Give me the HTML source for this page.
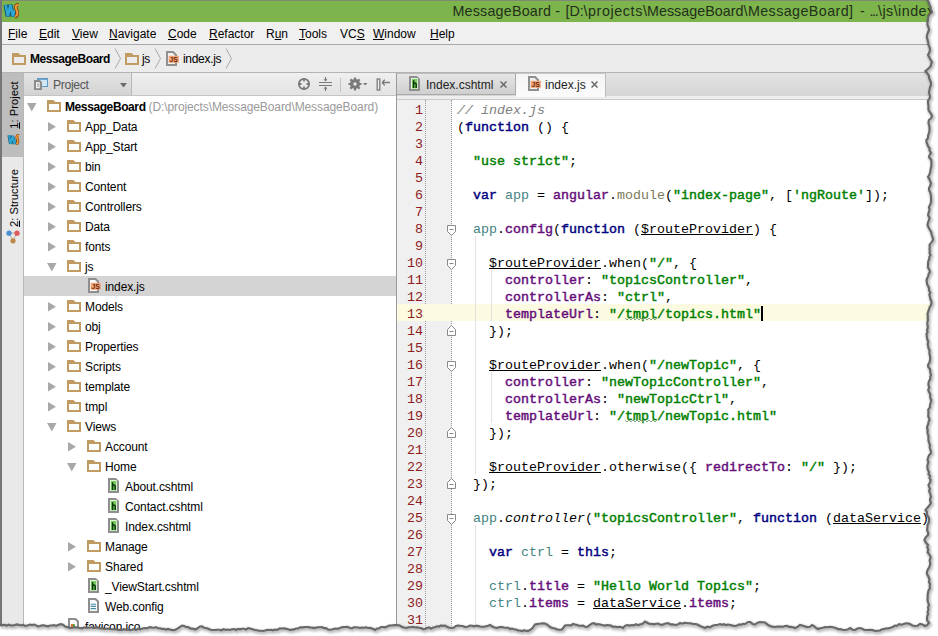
<!DOCTYPE html>
<html><head><meta charset="utf-8">
<style>
*{margin:0;padding:0;box-sizing:border-box}
html,body{width:938px;height:636px;overflow:hidden;background:#fff}
body{position:relative;font-family:"Liberation Sans",sans-serif;font-size:12px;color:#000}
.abs{position:absolute}
#frame{position:absolute;left:0;top:0;width:938px;height:636px;overflow:hidden}
#lb{left:0;top:0;width:2px;height:636px;background:#767676}
#tb{left:0;top:0;width:938px;height:1px;background:#7f8a76}
#title{left:0;top:0;width:938px;height:22px;background:#7db44b}
#title .t{position:absolute;top:3px;font-size:14.3px;color:#22301a;white-space:nowrap}
#menu{left:0;top:22px;width:938px;height:23px;background:#f0f0f0;border-bottom:1px solid #a8a8a8}
#menu span{position:absolute;top:5px;font-size:12px;color:#000}
#menu u{text-decoration:underline;text-underline-offset:1px}
#crumb{left:0;top:45px;width:938px;height:28px;background:#ececec;border-bottom:1px solid #b4b4b4}
.c{position:absolute;top:52px;font-size:12px;white-space:nowrap;letter-spacing:-0.3px}
#strip{left:2px;top:73px;width:22px;height:563px;background:#e9e9e9;border-right:1px solid #b9b9b9}
#phead{left:24px;top:73px;width:372px;height:23px;background:linear-gradient(#efefef,#e3e3e3);border-bottom:1px solid #c4c4c4}
#combo{left:24px;top:73px;width:108px;height:22px;background:linear-gradient(#e4e4e4,#d3d3d3);border-right:1px solid #b8b8b8}
#tabs{left:397px;top:73px;width:541px;height:23px;background:linear-gradient(#e2e2e2,#d6d6d6)}
#edb{left:396px;top:73px;width:1px;height:563px;background:#9a9a9a}
#gut{left:397px;top:96px;width:55px;height:540px;background:#f0f0f0}
.row{position:absolute;height:20px;line-height:20px;font-size:12px;letter-spacing:-0.12px;white-space:nowrap;color:#000}
.row.b{font-weight:bold;letter-spacing:-0.4px}
.gr{color:#9a9a9a;font-weight:normal;letter-spacing:-0.1px}
.code{position:absolute;left:457px;padding-top:2px;font-family:"Liberation Mono",monospace;font-size:13.33px;line-height:17px;height:19px;white-space:pre;color:#000}
.ln{position:absolute;left:397px;padding-top:2px;width:26px;text-align:right;font-family:"Liberation Mono",monospace;font-size:13.33px;line-height:17px;color:#8e1c1c}
.kw{color:#000080;-webkit-text-stroke:0.45px #000080}
.str{color:#008000;-webkit-text-stroke:0.45px #008000}
.cm{color:#808080;font-style:italic}
.prop{color:#660e7a;-webkit-text-stroke:0.45px #660e7a}
.it{color:#000;font-style:italic}
.loc{color:#458383}
.fn{color:#7a7a5a}
.ul{text-decoration:underline}
.caret{display:inline-block;width:2px;height:15px;background:#000;vertical-align:-3px}
</style></head><body>
<div id="frame">
<div id="title" class="abs"><span class="t" style="left:452.5px;letter-spacing:0.2px">MessageBoard -</span><span class="t" style="left:565.5px;letter-spacing:0px">[D:</span><span class="t" style="left:583.5px;letter-spacing:0.6px">\projects</span><span class="t" style="left:643px;letter-spacing:0.03px">\MessageBoard</span><span class="t" style="left:743.5px;letter-spacing:0.42px">\MessageBoard]</span><span class="t" style="left:860px;letter-spacing:0px">-</span><span class="t" style="left:869.5px;letter-spacing:-1.4px">...</span><span class="t" style="left:878px;letter-spacing:0.46px">\js\index.js</span></div>
<svg class="abs" style="left:2px;top:2px" width="20" height="18" viewBox="2 2 20 18"><path d="M5.7 4.8L7.8 16.3L10.4 5L12.9 16.3L14.6 10" fill="none" stroke="#0c5672" stroke-width="4.4" stroke-linejoin="miter" stroke-miterlimit="3"/><path d="M5.7 4.8L7.8 16.3L10.4 5L12.9 16.3L14.6 10" fill="none" stroke="#2fa6d4" stroke-width="2.6" stroke-linejoin="miter" stroke-miterlimit="3"/><path d="M18.6 5C15.8 4.4 15 7 16.4 9.6C17.9 12.3 17.6 16.2 15 16.6" fill="none" stroke="#80400c" stroke-width="3.6" stroke-linecap="butt"/><path d="M18.6 5C15.8 4.4 15 7 16.4 9.6C17.9 12.3 17.6 16.2 15 16.6" fill="none" stroke="#f39a3c" stroke-width="2" stroke-linecap="butt"/></svg>
<div id="tb" class="abs"></div>
<div id="menu" class="abs">
<span style="left:8px"><u>F</u>ile</span>
<span style="left:39px"><u>E</u>dit</span>
<span style="left:72px"><u>V</u>iew</span>
<span style="left:109px"><u>N</u>avigate</span>
<span style="left:168px"><u>C</u>ode</span>
<span style="left:209px"><u>R</u>efactor</span>
<span style="left:266px">R<u>u</u>n</span>
<span style="left:299px"><u>T</u>ools</span>
<span style="left:340px">VC<u>S</u></span>
<span style="left:373px"><u>W</u>indow</span>
<span style="left:430px"><u>H</u>elp</span>
</div>
<div id="crumb" class="abs"></div>
<svg class="abs" style="left:12px;top:53px" width="14" height="12" viewBox="0 0 14 12"><path d="M0 0H6.5L8.5 2H14V12H0Z" fill="#c09c62"/><rect x="2" y="4" width="10" height="6" fill="#ececec"/></svg>
<span class="c" style="left:30px;font-weight:bold;letter-spacing:-0.45px">MessageBoard</span>
<svg class="abs" style="left:114px;top:48px" width="8" height="22"><path d="M1 0.5L6.5 10.5L1 20.5" fill="none" stroke="#a8a8a8" stroke-width="1"/></svg>
<svg class="abs" style="left:125px;top:53px" width="14" height="12" viewBox="0 0 14 12"><path d="M0 0H6.5L8.5 2H14V12H0Z" fill="#c09c62"/><rect x="2" y="4" width="10" height="6" fill="#ececec"/></svg>
<span class="c" style="left:142px">js</span>
<svg class="abs" style="left:154px;top:48px" width="8" height="22"><path d="M1 0.5L6.5 10.5L1 20.5" fill="none" stroke="#a8a8a8" stroke-width="1"/></svg>
<svg class="abs" style="left:166px;top:51px" width="14" height="15" viewBox="0 0 14 15"><path d="M1 1H7L10 4V14H1Z" fill="#f0f0f0" stroke="#909090" stroke-width="2"/><rect x="2.7" y="4.8" width="10.2" height="7" fill="#f2a47c"/><text x="3.6" y="10.9" font-family="Liberation Sans" font-size="6.8" font-weight="bold" fill="#6a2800">JS</text></svg>
<span class="c" style="left:183px">index.js</span>
<svg class="abs" style="left:225px;top:48px" width="8" height="22"><path d="M1 0.5L6.5 10.5L1 20.5" fill="none" stroke="#a8a8a8" stroke-width="1"/></svg>

<div id="strip" class="abs"></div>
<div class="abs" style="left:2px;top:73px;width:21px;height:84px;background:#bdbdbd"></div>
<div class="abs" style="left:-17px;top:98px;width:62px;height:14px;transform:rotate(-90deg);font-size:11.2px;line-height:14px;text-align:center;white-space:nowrap"><u>1</u>: Project</div>
<svg class="abs" style="left:7px;top:134px" width="13" height="11" viewBox="0 0 13 11"><path d="M2 1.2L3.6 9.8L5.6 2L7.4 9.8L8.6 5.5" fill="none" stroke="#15607a" stroke-width="3.2" stroke-miterlimit="3"/><path d="M2 1.2L3.6 9.8L5.6 2L7.4 9.8L8.6 5.5" fill="none" stroke="#2fa6d4" stroke-width="1.8" stroke-miterlimit="3"/><path d="M12 1.5C10 0.9 9.3 3 10.3 5C11.3 7 11 9.6 9 9.9" fill="none" stroke="#8a4810" stroke-width="2.8"/><path d="M12 1.5C10 0.9 9.3 3 10.3 5C11.3 7 11 9.6 9 9.9" fill="none" stroke="#f39a3c" stroke-width="1.5"/></svg>
<div class="abs" style="left:-24px;top:191px;width:76px;height:14px;transform:rotate(-90deg);font-size:11.2px;line-height:14px;text-align:center;white-space:nowrap"><u>2</u>: Structure</div>
<svg class="abs" style="left:6px;top:230px" width="14" height="14" viewBox="0 0 14 14"><path d="M3 3L7 10.5L11 3Z" fill="none" stroke="#b0b0b0" stroke-width="1"/><circle cx="3" cy="3.2" r="2.6" fill="#4a90d0"/><circle cx="11" cy="3.2" r="2.6" fill="#e05a5a"/><circle cx="7" cy="10.8" r="2.6" fill="#c08848"/></svg>

<div id="phead" class="abs"></div>
<div id="combo" class="abs"></div>
<svg class="abs" style="left:33px;top:77px" width="16" height="13" viewBox="0 0 16 13"><rect x="4.5" y="1.5" width="10" height="8" fill="#d2e6f6" stroke="#5c98c4" stroke-width="1"/><rect x="4" y="1" width="11" height="1.8" fill="#5c98c4"/><path d="M1 3H7L9 5V13H1Z" fill="#8c8c8c"/><rect x="3" y="5.2" width="3.8" height="6" fill="#f2f2f2"/><path d="M4 7.3H6M4 9.2H6" stroke="#8c8c8c" stroke-width="0.9"/></svg>
<span class="abs" style="left:53px;top:78px;font-size:12.2px;color:#555;letter-spacing:-0.35px">Project</span>
<svg class="abs" style="left:120px;top:83px" width="8" height="5"><path d="M0 0H7L3.5 4.5Z" fill="#6a6a6a"/></svg>
<svg class="abs" style="left:297px;top:77px" width="14" height="14" viewBox="0 0 14 14"><circle cx="7" cy="7" r="5.2" fill="none" stroke="#7a7a7a" stroke-width="1.8"/><path d="M7 1V4.5M7 9.5V13M1 7H4.5M9.5 7H13" stroke="#7a7a7a" stroke-width="1.8"/></svg>
<svg class="abs" style="left:319px;top:77px" width="13" height="14" viewBox="0 0 13 14"><path d="M0 5.5H13M0 8.5H13M6.5 0V3.5M6.5 10.5V14" stroke="#7a7a7a" stroke-width="1.2"/><path d="M4.5 2.2L6.5 4.6L8.5 2.2ZM4.5 11.8L6.5 9.4L8.5 11.8Z" fill="#7a7a7a"/></svg>
<div class="abs" style="left:340px;top:78px;width:1px;height:14px;background:#c4c4c4"></div>
<svg class="abs" style="left:348px;top:77px" width="20" height="14" viewBox="0 0 20 14"><circle cx="7" cy="7" r="3.4" fill="none" stroke="#7a7a7a" stroke-width="3.4"/><path d="M7 0.5V3M7 11V13.5M0.5 7H3M11 7H13.5M2.4 2.4L4 4M10 10L11.6 11.6M2.4 11.6L4 10M10 4L11.6 2.4" stroke="#7a7a7a" stroke-width="2.2"/><path d="M15 6H19.5L17.25 8.5Z" fill="#7a7a7a"/></svg>
<svg class="abs" style="left:376px;top:78px" width="15" height="13" viewBox="0 0 15 13"><rect x="1.2" y="1" width="2.6" height="11" fill="#f4f4f4" stroke="#7a7a7a" stroke-width="1.3"/><path d="M6 4.5H14M6 4.5L8.8 1.7M6 4.5L8.8 7.3" fill="none" stroke="#7a7a7a" stroke-width="1.3"/></svg>

<div class="abs" style="left:24px;top:276px;width:372px;height:20px;background:#d4d4d4"></div>
<svg class="abs" style="left:27px;top:103px" width="10" height="9"><path d="M0 0H9.5L4.75 8.5Z" fill="#a8a8a8"/></svg>
<svg class="abs" style="left:47px;top:100px" width="14" height="12" viewBox="0 0 14 12"><path d="M0 0H6.5L8.5 2H14V12H0Z" fill="#c09c62"/><rect x="2" y="4" width="10" height="6" fill="#fff"/></svg>
<div class="row b" style="left:65px;top:97px">MessageBoard <span class="gr">(D:\projects\MessageBoard\MessageBoard)</span></div>
<svg class="abs" style="left:48px;top:122px" width="9" height="10"><path d="M0 0V9.5L8 4.75Z" fill="#a8a8a8"/></svg>
<svg class="abs" style="left:67px;top:120px" width="14" height="12" viewBox="0 0 14 12"><path d="M0 0H6.5L8.5 2H14V12H0Z" fill="#c09c62"/><rect x="2" y="4" width="10" height="6" fill="#fff"/></svg>
<div class="row" style="left:85px;top:117px">App_Data</div>
<svg class="abs" style="left:48px;top:142px" width="9" height="10"><path d="M0 0V9.5L8 4.75Z" fill="#a8a8a8"/></svg>
<svg class="abs" style="left:67px;top:140px" width="14" height="12" viewBox="0 0 14 12"><path d="M0 0H6.5L8.5 2H14V12H0Z" fill="#c09c62"/><rect x="2" y="4" width="10" height="6" fill="#fff"/></svg>
<div class="row" style="left:85px;top:137px">App_Start</div>
<svg class="abs" style="left:48px;top:162px" width="9" height="10"><path d="M0 0V9.5L8 4.75Z" fill="#a8a8a8"/></svg>
<svg class="abs" style="left:67px;top:160px" width="14" height="12" viewBox="0 0 14 12"><path d="M0 0H6.5L8.5 2H14V12H0Z" fill="#c09c62"/><rect x="2" y="4" width="10" height="6" fill="#fff"/></svg>
<div class="row" style="left:85px;top:157px">bin</div>
<svg class="abs" style="left:48px;top:182px" width="9" height="10"><path d="M0 0V9.5L8 4.75Z" fill="#a8a8a8"/></svg>
<svg class="abs" style="left:67px;top:180px" width="14" height="12" viewBox="0 0 14 12"><path d="M0 0H6.5L8.5 2H14V12H0Z" fill="#c09c62"/><rect x="2" y="4" width="10" height="6" fill="#fff"/></svg>
<div class="row" style="left:85px;top:177px">Content</div>
<svg class="abs" style="left:48px;top:202px" width="9" height="10"><path d="M0 0V9.5L8 4.75Z" fill="#a8a8a8"/></svg>
<svg class="abs" style="left:67px;top:200px" width="14" height="12" viewBox="0 0 14 12"><path d="M0 0H6.5L8.5 2H14V12H0Z" fill="#c09c62"/><rect x="2" y="4" width="10" height="6" fill="#fff"/></svg>
<div class="row" style="left:85px;top:197px">Controllers</div>
<svg class="abs" style="left:48px;top:222px" width="9" height="10"><path d="M0 0V9.5L8 4.75Z" fill="#a8a8a8"/></svg>
<svg class="abs" style="left:67px;top:220px" width="14" height="12" viewBox="0 0 14 12"><path d="M0 0H6.5L8.5 2H14V12H0Z" fill="#c09c62"/><rect x="2" y="4" width="10" height="6" fill="#fff"/></svg>
<div class="row" style="left:85px;top:217px">Data</div>
<svg class="abs" style="left:48px;top:242px" width="9" height="10"><path d="M0 0V9.5L8 4.75Z" fill="#a8a8a8"/></svg>
<svg class="abs" style="left:67px;top:240px" width="14" height="12" viewBox="0 0 14 12"><path d="M0 0H6.5L8.5 2H14V12H0Z" fill="#c09c62"/><rect x="2" y="4" width="10" height="6" fill="#fff"/></svg>
<div class="row" style="left:85px;top:237px">fonts</div>
<svg class="abs" style="left:47px;top:263px" width="10" height="9"><path d="M0 0H9.5L4.75 8.5Z" fill="#a8a8a8"/></svg>
<svg class="abs" style="left:67px;top:260px" width="14" height="12" viewBox="0 0 14 12"><path d="M0 0H6.5L8.5 2H14V12H0Z" fill="#c09c62"/><rect x="2" y="4" width="10" height="6" fill="#fff"/></svg>
<div class="row" style="left:85px;top:257px">js</div>
<svg class="abs" style="left:88px;top:278px" width="14" height="15" viewBox="0 0 14 15"><path d="M1 1H7.5L10 3.5V14H1Z" fill="#fafafa" stroke="#8e8e8e" stroke-width="2"/><rect x="2.7" y="4.8" width="10.2" height="7" fill="#f2a47c"/><text x="3.6" y="10.9" font-family="Liberation Sans" font-size="6.8" font-weight="bold" fill="#6a2800">JS</text></svg>
<div class="row" style="left:105px;top:277px">index.js</div>
<svg class="abs" style="left:48px;top:302px" width="9" height="10"><path d="M0 0V9.5L8 4.75Z" fill="#a8a8a8"/></svg>
<svg class="abs" style="left:67px;top:300px" width="14" height="12" viewBox="0 0 14 12"><path d="M0 0H6.5L8.5 2H14V12H0Z" fill="#c09c62"/><rect x="2" y="4" width="10" height="6" fill="#fff"/></svg>
<div class="row" style="left:85px;top:297px">Models</div>
<svg class="abs" style="left:48px;top:322px" width="9" height="10"><path d="M0 0V9.5L8 4.75Z" fill="#a8a8a8"/></svg>
<svg class="abs" style="left:67px;top:320px" width="14" height="12" viewBox="0 0 14 12"><path d="M0 0H6.5L8.5 2H14V12H0Z" fill="#c09c62"/><rect x="2" y="4" width="10" height="6" fill="#fff"/></svg>
<div class="row" style="left:85px;top:317px">obj</div>
<svg class="abs" style="left:48px;top:342px" width="9" height="10"><path d="M0 0V9.5L8 4.75Z" fill="#a8a8a8"/></svg>
<svg class="abs" style="left:67px;top:340px" width="14" height="12" viewBox="0 0 14 12"><path d="M0 0H6.5L8.5 2H14V12H0Z" fill="#c09c62"/><rect x="2" y="4" width="10" height="6" fill="#fff"/></svg>
<div class="row" style="left:85px;top:337px">Properties</div>
<svg class="abs" style="left:48px;top:362px" width="9" height="10"><path d="M0 0V9.5L8 4.75Z" fill="#a8a8a8"/></svg>
<svg class="abs" style="left:67px;top:360px" width="14" height="12" viewBox="0 0 14 12"><path d="M0 0H6.5L8.5 2H14V12H0Z" fill="#c09c62"/><rect x="2" y="4" width="10" height="6" fill="#fff"/></svg>
<div class="row" style="left:85px;top:357px">Scripts</div>
<svg class="abs" style="left:48px;top:382px" width="9" height="10"><path d="M0 0V9.5L8 4.75Z" fill="#a8a8a8"/></svg>
<svg class="abs" style="left:67px;top:380px" width="14" height="12" viewBox="0 0 14 12"><path d="M0 0H6.5L8.5 2H14V12H0Z" fill="#c09c62"/><rect x="2" y="4" width="10" height="6" fill="#fff"/></svg>
<div class="row" style="left:85px;top:377px">template</div>
<svg class="abs" style="left:48px;top:402px" width="9" height="10"><path d="M0 0V9.5L8 4.75Z" fill="#a8a8a8"/></svg>
<svg class="abs" style="left:67px;top:400px" width="14" height="12" viewBox="0 0 14 12"><path d="M0 0H6.5L8.5 2H14V12H0Z" fill="#c09c62"/><rect x="2" y="4" width="10" height="6" fill="#fff"/></svg>
<div class="row" style="left:85px;top:397px">tmpl</div>
<svg class="abs" style="left:47px;top:423px" width="10" height="9"><path d="M0 0H9.5L4.75 8.5Z" fill="#a8a8a8"/></svg>
<svg class="abs" style="left:67px;top:420px" width="14" height="12" viewBox="0 0 14 12"><path d="M0 0H6.5L8.5 2H14V12H0Z" fill="#c09c62"/><rect x="2" y="4" width="10" height="6" fill="#fff"/></svg>
<div class="row" style="left:85px;top:417px">Views</div>
<svg class="abs" style="left:68px;top:442px" width="9" height="10"><path d="M0 0V9.5L8 4.75Z" fill="#a8a8a8"/></svg>
<svg class="abs" style="left:87px;top:440px" width="14" height="12" viewBox="0 0 14 12"><path d="M0 0H6.5L8.5 2H14V12H0Z" fill="#c09c62"/><rect x="2" y="4" width="10" height="6" fill="#fff"/></svg>
<div class="row" style="left:105px;top:437px">Account</div>
<svg class="abs" style="left:67px;top:463px" width="10" height="9"><path d="M0 0H9.5L4.75 8.5Z" fill="#a8a8a8"/></svg>
<svg class="abs" style="left:87px;top:460px" width="14" height="12" viewBox="0 0 14 12"><path d="M0 0H6.5L8.5 2H14V12H0Z" fill="#c09c62"/><rect x="2" y="4" width="10" height="6" fill="#fff"/></svg>
<div class="row" style="left:105px;top:457px">Home</div>
<svg class="abs" style="left:108px;top:478px" width="12" height="15" viewBox="0 0 12 15"><path d="M1 1H7.5L10 3.5V14H1Z" fill="#fafafa" stroke="#8e8e8e" stroke-width="2"/><rect x="2" y="2" width="6.8" height="11" fill="#e4f6dc"/><rect x="3" y="3" width="5.2" height="9.4" fill="#78cc5e"/><path d="M4.6 4.2V12M4.6 8.2c0-1.5 2.6-1.5 2.6 0V12" fill="none" stroke="#0b3a0b" stroke-width="1.5"/></svg>
<div class="row" style="left:125px;top:477px">About.cshtml</div>
<svg class="abs" style="left:108px;top:498px" width="12" height="15" viewBox="0 0 12 15"><path d="M1 1H7.5L10 3.5V14H1Z" fill="#fafafa" stroke="#8e8e8e" stroke-width="2"/><rect x="2" y="2" width="6.8" height="11" fill="#e4f6dc"/><rect x="3" y="3" width="5.2" height="9.4" fill="#78cc5e"/><path d="M4.6 4.2V12M4.6 8.2c0-1.5 2.6-1.5 2.6 0V12" fill="none" stroke="#0b3a0b" stroke-width="1.5"/></svg>
<div class="row" style="left:125px;top:497px">Contact.cshtml</div>
<svg class="abs" style="left:108px;top:518px" width="12" height="15" viewBox="0 0 12 15"><path d="M1 1H7.5L10 3.5V14H1Z" fill="#fafafa" stroke="#8e8e8e" stroke-width="2"/><rect x="2" y="2" width="6.8" height="11" fill="#e4f6dc"/><rect x="3" y="3" width="5.2" height="9.4" fill="#78cc5e"/><path d="M4.6 4.2V12M4.6 8.2c0-1.5 2.6-1.5 2.6 0V12" fill="none" stroke="#0b3a0b" stroke-width="1.5"/></svg>
<div class="row" style="left:125px;top:517px">Index.cshtml</div>
<svg class="abs" style="left:68px;top:542px" width="9" height="10"><path d="M0 0V9.5L8 4.75Z" fill="#a8a8a8"/></svg>
<svg class="abs" style="left:87px;top:540px" width="14" height="12" viewBox="0 0 14 12"><path d="M0 0H6.5L8.5 2H14V12H0Z" fill="#c09c62"/><rect x="2" y="4" width="10" height="6" fill="#fff"/></svg>
<div class="row" style="left:105px;top:537px">Manage</div>
<svg class="abs" style="left:68px;top:562px" width="9" height="10"><path d="M0 0V9.5L8 4.75Z" fill="#a8a8a8"/></svg>
<svg class="abs" style="left:87px;top:560px" width="14" height="12" viewBox="0 0 14 12"><path d="M0 0H6.5L8.5 2H14V12H0Z" fill="#c09c62"/><rect x="2" y="4" width="10" height="6" fill="#fff"/></svg>
<div class="row" style="left:105px;top:557px">Shared</div>
<svg class="abs" style="left:88px;top:578px" width="12" height="15" viewBox="0 0 12 15"><path d="M1 1H7.5L10 3.5V14H1Z" fill="#fafafa" stroke="#8e8e8e" stroke-width="2"/><rect x="2" y="2" width="6.8" height="11" fill="#e4f6dc"/><rect x="3" y="3" width="5.2" height="9.4" fill="#78cc5e"/><path d="M4.6 4.2V12M4.6 8.2c0-1.5 2.6-1.5 2.6 0V12" fill="none" stroke="#0b3a0b" stroke-width="1.5"/></svg>
<div class="row" style="left:105px;top:577px">_ViewStart.cshtml</div>
<svg class="abs" style="left:88px;top:598px" width="12" height="15" viewBox="0 0 12 15"><path d="M1 1H7.5L10 3.5V14H1Z" fill="#fafafa" stroke="#8e8e8e" stroke-width="2"/><path d="M2.6 6.2H8M2.6 8.4H8M2.6 10.6H8" stroke="#4a8ea8" stroke-width="1.1"/></svg>
<div class="row" style="left:105px;top:597px">Web.config</div>
<svg class="abs" style="left:68px;top:618px" width="12" height="15" viewBox="0 0 12 15"><path d="M1 1H7.5L10 3.5V14H1Z" fill="#fafafa" stroke="#8e8e8e" stroke-width="2"/><rect x="3" y="6" width="2" height="5" fill="#e07030"/><rect x="5" y="6" width="2" height="5" fill="#60b040"/></svg>
<div class="row" style="left:85px;top:617px">favicon.ico</div>

<div id="tabs" class="abs"></div>
<div id="gut" class="abs"></div>
<div class="abs" style="left:397px;top:96px;width:541px;height:4px;background:#eeeeee;border-bottom:1px solid #c8c8c8"></div>
<div class="abs" style="left:397px;top:73px;width:119px;height:22px;background:linear-gradient(#e6e6e6,#cfcfcf);border:1px solid #aaaaaa;border-left:none;border-top-color:#bdbdbd"></div>
<svg class="abs" style="left:409px;top:76px" width="12" height="15" viewBox="0 0 12 15"><path d="M1 1H7.5L10 3.5V14H1Z" fill="#fafafa" stroke="#8e8e8e" stroke-width="2"/><rect x="2" y="2" width="6.8" height="11" fill="#e4f6dc"/><rect x="3" y="3" width="5.2" height="9.4" fill="#78cc5e"/><path d="M4.6 4.2V12M4.6 8.2c0-1.5 2.6-1.5 2.6 0V12" fill="none" stroke="#0b3a0b" stroke-width="1.5"/></svg>
<span class="abs" style="left:426px;top:78px;font-size:12px;color:#222">Index.cshtml</span>
<svg class="abs" style="left:500px;top:81px" width="7" height="7"><path d="M0.5 0.5L6.5 6.5M6.5 0.5L0.5 6.5" stroke="#6a6a6a" stroke-width="1.5"/></svg>
<div class="abs" style="left:516px;top:73px;width:90px;height:24px;background:linear-gradient(#f4f4f4,#fbfbfb);border-right:1px solid #bcbcbc;border-top:1px solid #c8c8c8"></div>
<svg class="abs" style="left:528px;top:76px" width="14" height="15" viewBox="0 0 14 15"><path d="M1 1H7L10 4V14H1Z" fill="#f0f0f0" stroke="#909090" stroke-width="2"/><rect x="2.7" y="4.8" width="10.2" height="7" fill="#f2a47c"/><text x="3.6" y="10.9" font-family="Liberation Sans" font-size="6.8" font-weight="bold" fill="#6a2800">JS</text></svg>
<span class="abs" style="left:545px;top:78px;font-size:12px;color:#222">index.js</span>
<svg class="abs" style="left:591px;top:81px" width="7" height="7"><path d="M0.5 0.5L6.5 6.5M6.5 0.5L0.5 6.5" stroke="#6a6a6a" stroke-width="1.5"/></svg>
<div class="abs" style="left:425px;top:100px;width:1px;height:536px;border-left:1px dotted #9a9a9a"></div>
<div class="abs" style="left:451px;top:100px;width:1px;height:536px;border-left:1px dotted #9a9a9a"></div>
<div class="abs" style="left:397px;top:304px;width:541px;height:17px;background:#fcfbe2"></div>
<div class="abs" style="left:475px;top:236px;width:1px;height:238px;background:#e2e2e2"></div>
<div class="abs" style="left:491px;top:270px;width:1px;height:51px;background:#e2e2e2"></div>
<div class="abs" style="left:491px;top:372px;width:1px;height:51px;background:#e2e2e2"></div>
<div class="abs" style="left:475px;top:525px;width:1px;height:102px;background:#e2e2e2"></div>
<div class="ln" style="top:100px">1</div>
<div class="code" style="top:100px"><span class="cm">// index.js</span></div>
<div class="ln" style="top:117px">2</div>
<div class="code" style="top:117px">(<span class="kw">function</span> () {</div>
<div class="ln" style="top:134px">3</div>
<div class="code" style="top:134px"></div>
<div class="ln" style="top:151px">4</div>
<div class="code" style="top:151px">  <span class="str">"use strict"</span>;</div>
<div class="ln" style="top:168px">5</div>
<div class="code" style="top:168px"></div>
<div class="ln" style="top:185px">6</div>
<div class="code" style="top:185px">  <span class="kw">var</span> <span class="loc">app</span> = <span class="prop">angular</span>.<span class="fn">module</span>(<span class="str">"index-page"</span>, [<span class="str">'ngRoute'</span>]);</div>
<div class="ln" style="top:202px">7</div>
<div class="code" style="top:202px"></div>
<div class="ln" style="top:219px">8</div>
<div class="code" style="top:219px">  <span class="loc">app</span>.<span class="prop">config</span>(<span class="kw">function</span> (<span class="ul">$routeProvider</span>) {</div>
<div class="ln" style="top:236px">9</div>
<div class="code" style="top:236px"></div>
<div class="ln" style="top:253px">10</div>
<div class="code" style="top:253px">    <span class="ul">$routeProvider</span>.when(<span class="str">"/"</span>, {</div>
<div class="ln" style="top:270px">11</div>
<div class="code" style="top:270px">      <span class="prop">controller</span>: <span class="str">"topicsController"</span>,</div>
<div class="ln" style="top:287px">12</div>
<div class="code" style="top:287px">      <span class="prop">controllerAs</span>: <span class="str">"ctrl"</span>,</div>
<div class="ln" style="top:304px">13</div>
<div class="code" style="top:304px">      <span class="prop">templateUrl</span>: <span class="str">"/<span class="sq">tmpl</span>/topics.html"</span><span class="caret"></span></div>
<div class="ln" style="top:321px">14</div>
<div class="code" style="top:321px">    });</div>
<div class="ln" style="top:338px">15</div>
<div class="code" style="top:338px"></div>
<div class="ln" style="top:355px">16</div>
<div class="code" style="top:355px">    <span class="ul">$routeProvider</span>.when(<span class="str">"/newTopic"</span>, {</div>
<div class="ln" style="top:372px">17</div>
<div class="code" style="top:372px">      <span class="prop">controller</span>: <span class="str">"newTopicController"</span>,</div>
<div class="ln" style="top:389px">18</div>
<div class="code" style="top:389px">      <span class="prop">controllerAs</span>: <span class="str">"newTopicCtrl"</span>,</div>
<div class="ln" style="top:406px">19</div>
<div class="code" style="top:406px">      <span class="prop">templateUrl</span>: <span class="str">"/<span class="sq">tmpl</span>/newTopic.html"</span></div>
<div class="ln" style="top:423px">20</div>
<div class="code" style="top:423px">    });</div>
<div class="ln" style="top:440px">21</div>
<div class="code" style="top:440px"></div>
<div class="ln" style="top:457px">22</div>
<div class="code" style="top:457px">    <span class="ul">$routeProvider</span>.otherwise({ <span class="prop">redirectTo</span>: <span class="str">"/"</span> });</div>
<div class="ln" style="top:474px">23</div>
<div class="code" style="top:474px">  });</div>
<div class="ln" style="top:491px">24</div>
<div class="code" style="top:491px"></div>
<div class="ln" style="top:508px">25</div>
<div class="code" style="top:508px">  <span class="loc">app</span>.<span class="it">controller</span>(<span class="str">"topicsController"</span>, <span class="kw">function</span> (<span class="ul">dataService</span>) {</div>
<div class="ln" style="top:525px">26</div>
<div class="code" style="top:525px"></div>
<div class="ln" style="top:542px">27</div>
<div class="code" style="top:542px">    <span class="kw">var</span> <span class="loc">ctrl</span> = <span class="kw">this</span>;</div>
<div class="ln" style="top:559px">28</div>
<div class="code" style="top:559px"></div>
<div class="ln" style="top:576px">29</div>
<div class="code" style="top:576px">    <span class="loc">ctrl</span>.<span class="prop">title</span> = <span class="str">"Hello World Topics"</span>;</div>
<div class="ln" style="top:593px">30</div>
<div class="code" style="top:593px">    <span class="loc">ctrl</span>.<span class="prop">items</span> = <span class="ul">dataService</span>.<span class="prop">items</span>;</div>
<div class="ln" style="top:610px">31</div>
<div class="code" style="top:610px"></div>
<svg class="abs" style="left:0;top:0" width="938" height="636"><polyline points="625,318 626,319 627,320 628,319 629,318 630,319 631,320 632,319 633,318 634,319 635,320 636,319 637,318 638,319 639,320 640,319 641,318 642,319 643,320 644,319 645,318 646,319 647,320 648,319 649,318 650,319 651,320 652,319 653,318 654,319 655,320 656,319 657,318" fill="none" stroke="#86a884" stroke-width="1"/></svg>
<svg class="abs" style="left:0;top:0" width="938" height="636"><polyline points="625,420 626,421 627,422 628,421 629,420 630,421 631,422 632,421 633,420 634,421 635,422 636,421 637,420 638,421 639,422 640,421 641,420 642,421 643,422 644,421 645,420 646,421 647,422 648,421 649,420 650,421 651,422 652,421 653,420 654,421 655,422 656,421 657,420" fill="none" stroke="#86a884" stroke-width="1"/></svg>
<svg class="abs" style="left:447px;top:225px" width="9" height="11"><path d="M0.5 0.5H8.5V6.5L4.5 10.5L0.5 6.5Z" fill="#fff" stroke="#8a8a8a" stroke-width="1"/><path d="M2.5 4.5H6.5" stroke="#8a8a8a" stroke-width="1"/></svg>
<svg class="abs" style="left:447px;top:259px" width="9" height="11"><path d="M0.5 0.5H8.5V6.5L4.5 10.5L0.5 6.5Z" fill="#fff" stroke="#8a8a8a" stroke-width="1"/><path d="M2.5 4.5H6.5" stroke="#8a8a8a" stroke-width="1"/></svg>
<svg class="abs" style="left:447px;top:361px" width="9" height="11"><path d="M0.5 0.5H8.5V6.5L4.5 10.5L0.5 6.5Z" fill="#fff" stroke="#8a8a8a" stroke-width="1"/><path d="M2.5 4.5H6.5" stroke="#8a8a8a" stroke-width="1"/></svg>
<svg class="abs" style="left:447px;top:514px" width="9" height="11"><path d="M0.5 0.5H8.5V6.5L4.5 10.5L0.5 6.5Z" fill="#fff" stroke="#8a8a8a" stroke-width="1"/><path d="M2.5 4.5H6.5" stroke="#8a8a8a" stroke-width="1"/></svg>
<svg class="abs" style="left:447px;top:325px" width="9" height="11"><path d="M0.5 10.5H8.5V4.5L4.5 0.5L0.5 4.5Z" fill="#fff" stroke="#8a8a8a" stroke-width="1"/><path d="M2.5 6.5H6.5" stroke="#8a8a8a" stroke-width="1"/></svg>
<svg class="abs" style="left:447px;top:427px" width="9" height="11"><path d="M0.5 10.5H8.5V4.5L4.5 0.5L0.5 4.5Z" fill="#fff" stroke="#8a8a8a" stroke-width="1"/><path d="M2.5 6.5H6.5" stroke="#8a8a8a" stroke-width="1"/></svg>
<svg class="abs" style="left:447px;top:478px" width="9" height="11"><path d="M0.5 10.5H8.5V4.5L4.5 0.5L0.5 4.5Z" fill="#fff" stroke="#8a8a8a" stroke-width="1"/><path d="M2.5 6.5H6.5" stroke="#8a8a8a" stroke-width="1"/></svg>
<div id="edb" class="abs"></div>
<div id="lb" class="abs"></div>
<svg class="abs" style="left:0;top:0" width="938" height="636"><defs><filter id="bl" x="-5%" y="-5%" width="110%" height="110%"><feGaussianBlur stdDeviation="1.2"/></filter></defs><path d="M0.0 625.4 L2.2 625.1 L4.3 624.8 L6.5 625.6 L8.7 624.7 L10.8 625.5 L13.0 625.4 L15.0 625.1 L17.0 624.4 L19.0 625.0 L21.0 625.3 L23.0 624.9 L25.0 626.0 L27.3 625.6 L29.7 624.6 L32.0 625.0 L34.0 624.6 L36.0 625.4 L38.0 626.3 L40.0 626.0 L42.0 625.3 L44.0 625.4 L46.0 625.9 L48.0 626.3 L50.0 625.5 L52.0 625.5 L54.0 625.1 L56.0 625.9 L58.0 625.0 L60.5 624.2 L63.0 624.8 L65.0 626.5 L67.0 627.0 L70.0 628.0 L72.0 627.7 L74.0 627.4 L76.0 627.4 L78.0 627.7 L80.0 628.0 L82.0 628.4 L84.0 627.3 L86.0 627.8 L88.0 627.8 L90.0 627.5 L92.0 627.5 L94.0 628.0 L96.0 627.4 L98.0 627.6 L100.0 628.5 L102.0 628.1 L104.0 629.0 L106.0 628.7 L108.0 628.6 L110.0 629.0 L112.0 629.3 L114.0 629.2 L116.0 629.1 L118.0 630.0 L120.0 629.7 L122.0 630.0 L124.0 629.2 L126.0 629.7 L128.0 629.6 L130.0 630.1 L132.0 629.8 L134.0 629.1 L136.0 630.1 L138.0 628.7 L140.0 629.3 L142.5 628.5 L145.0 628.0 L147.3 628.2 L149.7 627.1 L152.0 627.5 L154.0 627.7 L156.0 627.1 L158.0 628.3 L160.0 628.2 L162.0 628.9 L164.0 628.8 L166.0 629.6 L168.0 628.9 L170.0 629.5 L172.5 630.1 L175.0 630.0 L177.3 628.7 L179.7 627.1 L182.0 625.5 L184.0 625.9 L186.0 627.0 L188.0 627.0 L190.3 628.5 L192.7 628.6 L195.0 629.5 L197.5 628.3 L200.0 626.5 L202.0 626.3 L204.0 627.8 L206.0 628.0 L208.2 628.7 L210.5 629.8 L212.8 630.0 L215.0 630.0 L217.1 629.7 L219.3 629.8 L221.4 630.3 L223.6 629.2 L225.7 629.9 L227.9 629.5 L230.0 630.0 L232.0 629.2 L234.0 629.0 L236.0 630.0 L238.0 628.8 L240.0 629.3 L242.0 628.8 L244.0 628.8 L246.0 629.5 L248.0 628.1 L250.0 628.6 L252.5 629.2 L255.0 630.0 L257.0 630.2 L259.0 630.8 L261.0 630.8 L263.0 631.0 L265.0 630.5 L267.0 629.9 L269.0 630.0 L271.0 629.7 L273.0 630.3 L275.0 629.5 L277.3 629.9 L279.7 628.3 L282.0 628.5 L284.0 628.4 L286.0 628.8 L288.0 629.2 L290.0 630.0 L292.0 629.6 L294.0 629.4 L296.0 628.5 L298.0 628.5 L300.3 627.2 L302.7 627.4 L305.0 627.0 L307.3 627.0 L309.7 627.4 L312.0 627.5 L314.0 628.1 L316.0 627.6 L318.0 627.2 L320.0 627.3 L322.0 627.0 L324.0 628.1 L326.0 628.0 L328.0 629.5 L330.3 629.8 L332.7 629.3 L335.0 628.5 L337.0 628.8 L339.0 628.4 L341.0 627.4 L343.0 627.1 L345.0 627.0 L347.5 626.9 L350.0 628.0 L352.0 628.2 L354.0 627.3 L356.0 627.3 L358.0 627.5 L360.0 628.0 L362.0 627.5 L364.0 627.7 L366.0 627.3 L368.0 628.0 L370.3 627.9 L372.7 628.8 L375.0 630.0 L377.0 628.6 L379.0 628.3 L381.0 627.0 L383.0 627.0 L385.0 627.3 L387.0 626.6 L389.0 625.6 L391.0 625.5 L393.0 625.3 L395.0 625.1 L397.0 625.0 L399.5 625.4 L402.0 627.0 L404.2 627.6 L406.3 628.0 L408.5 627.2 L410.7 627.3 L412.8 626.8 L415.0 627.5 L417.0 627.2 L419.0 627.8 L421.0 628.0 L423.0 629.2 L425.0 629.0 L427.0 628.1 L429.0 627.5 L431.0 628.6 L433.0 627.5 L435.0 627.2 L437.0 626.3 L439.0 626.6 L441.0 625.4 L443.0 625.9 L445.0 625.5 L447.3 627.1 L449.7 627.7 L452.0 628.0 L454.0 627.5 L456.0 626.0 L458.0 625.5 L460.3 625.8 L462.7 626.0 L465.0 627.0 L467.5 626.7 L470.0 625.5 L472.0 625.8 L474.0 626.3 L476.0 625.8 L478.0 625.9 L480.0 626.5 L482.0 626.7 L484.0 626.7 L486.0 626.2 L488.0 625.8 L490.0 625.0 L492.3 626.5 L494.7 627.4 L497.0 628.0 L499.5 627.1 L502.0 627.0 L504.0 627.5 L506.0 627.8 L508.0 627.7 L510.0 629.0 L512.0 628.5 L514.0 629.2 L516.0 629.5 L518.0 630.5 L520.0 630.5 L522.0 631.1 L524.0 630.2 L526.0 630.9 L528.0 630.9 L530.0 630.0 L532.5 628.0 L535.0 624.5 L537.0 624.1 L539.0 623.7 L541.0 623.5 L543.0 623.2 L545.0 623.5 L547.5 624.8 L550.0 627.0 L552.5 627.9 L555.0 628.5 L557.3 629.5 L559.7 629.7 L562.0 629.5 L565.0 625.5 L567.0 625.3 L569.0 625.3 L571.0 625.4 L573.0 624.0 L575.0 624.5 L577.0 625.0 L579.0 625.7 L581.0 625.7 L583.0 625.5 L585.0 626.7 L587.0 627.0 L589.5 625.2 L592.0 623.5 L594.0 623.2 L596.0 624.5 L598.0 624.0 L600.0 624.5 L602.3 625.1 L604.7 625.6 L607.0 625.0 L609.0 625.2 L611.0 625.6 L613.0 626.8 L615.0 626.5 L617.0 627.2 L619.0 626.7 L621.0 627.0 L623.0 628.0 L625.0 625.9 L627.0 625.0 L629.5 625.6 L632.0 625.0 L634.0 625.4 L636.0 624.2 L638.0 625.1 L640.0 624.5 L642.5 623.8 L645.0 621.5 L647.5 623.0 L650.0 624.0 L652.0 623.9 L654.0 624.3 L656.0 623.7 L658.0 623.6 L660.0 624.5 L662.0 624.9 L664.0 624.0 L666.0 623.4 L668.0 623.0 L670.3 624.4 L672.7 624.2 L675.0 625.0 L677.5 624.6 L680.0 623.0 L682.1 623.7 L684.3 622.8 L686.4 623.0 L688.6 623.2 L690.7 623.3 L692.9 624.0 L695.0 624.0 L697.5 624.6 L700.0 626.0 L702.5 626.9 L705.0 628.0 L707.3 626.7 L709.7 627.3 L712.0 626.0 L714.0 625.3 L716.0 625.0 L718.0 624.7 L720.0 624.1 L722.0 624.8 L724.0 624.2 L726.0 625.1 L728.0 624.5 L730.3 625.0 L732.7 625.6 L735.0 626.0 L737.0 625.6 L739.0 624.4 L741.0 624.7 L743.0 623.9 L745.0 624.0 L748.0 622.0 L750.3 622.0 L752.7 624.1 L755.0 624.5 L757.5 622.7 L760.0 622.0 L762.5 622.2 L765.0 622.5 L767.5 624.6 L770.0 626.0 L772.5 626.6 L775.0 627.0 L777.0 626.5 L779.0 626.6 L781.0 626.5 L783.0 626.7 L785.0 626.0 L787.0 625.8 L789.0 626.9 L791.0 626.8 L793.0 627.2 L795.0 628.0 L797.5 626.9 L800.0 625.0 L802.0 625.5 L804.0 626.1 L806.0 626.9 L808.0 627.0 L810.0 626.7 L812.0 625.0 L814.0 626.2 L816.0 627.8 L818.0 629.0 L820.3 628.3 L822.7 627.7 L825.0 627.0 L827.3 627.3 L829.7 626.9 L832.0 627.0 L834.0 627.6 L836.0 628.0 L838.0 629.2 L840.0 629.0 L842.5 629.8 L845.0 630.0 L847.5 629.6 L850.0 628.0 L852.5 629.7 L855.0 630.0 L857.5 628.6 L860.0 628.0 L862.0 628.6 L864.0 629.7 L866.0 630.0 L868.0 630.0 L870.3 629.8 L872.7 630.1 L875.0 631.0 L877.5 630.7 L880.0 630.5 L882.0 629.3 L884.0 629.1 L886.0 628.3 L888.0 628.5 L890.3 627.8 L892.7 627.0 L895.0 625.5 L897.0 625.7 L899.0 624.1 L901.0 624.6 L903.0 624.2 L905.0 623.5 L907.5 623.2 L910.0 624.0 L912.5 625.6 L915.0 626.0 L917.5 625.7 L920.0 624.0 L922.5 624.6 L925.0 626.0 L927.0 625.2 L929.0 623.0 L927.0 620.0 L927.0 618.0 L927.2 616.0 L928.2 614.0 L927.5 612.0 L928.5 609.7 L928.0 607.3 L929.0 605.0 L928.1 602.5 L927.5 600.0 L927.7 597.7 L927.6 595.3 L928.0 593.0 L928.5 590.5 L930.0 588.0 L929.6 586.0 L930.1 584.0 L928.9 582.0 L929.5 580.0 L929.0 578.0 L928.2 576.0 L926.9 574.0 L927.0 572.0 L927.7 569.7 L929.2 567.3 L930.0 565.0 L930.2 562.7 L929.6 560.3 L930.5 558.0 L930.3 556.0 L929.0 554.0 L927.5 552.0 L928.4 549.7 L927.2 547.3 L928.0 545.0 L925.8 542.5 L924.4 540.0 L925.5 537.5 L928.0 535.0 L928.3 533.0 L927.4 531.0 L927.1 529.0 L927.5 527.0 L927.5 525.0 L928.7 522.7 L929.0 520.3 L929.0 518.0 L927.7 516.0 L926.7 514.0 L927.0 512.0 L925.5 510.0 L927.4 507.7 L929.5 505.3 L931.0 503.0 L930.2 501.0 L930.0 499.0 L930.9 497.0 L930.5 495.0 L930.0 493.0 L929.0 491.0 L930.0 489.0 L929.1 487.0 L928.5 485.0 L930.0 482.5 L930.6 480.0 L929.4 478.0 L930.1 476.0 L928.4 474.0 L929.1 472.0 L927.9 470.0 L927.5 468.0 L927.3 466.0 L927.8 464.0 L928.5 462.0 L927.5 460.0 L928.0 458.0 L928.9 455.5 L931.0 453.0 L930.8 451.0 L930.1 449.0 L929.6 447.0 L930.0 445.0 L929.1 442.8 L928.5 440.5 L928.4 438.2 L928.5 436.0 L927.8 434.0 L927.4 432.0 L927.8 430.0 L927.0 428.0 L927.3 426.0 L928.3 424.0 L928.4 422.0 L929.5 420.0 L929.0 418.0 L928.2 416.0 L928.4 414.0 L928.5 412.0 L928.2 409.7 L929.9 407.3 L930.0 405.0 L930.7 402.5 L931.3 400.0 L930.2 398.0 L930.1 396.0 L930.3 394.0 L929.0 392.0 L928.2 389.8 L929.3 387.5 L928.5 385.2 L928.5 383.0 L929.1 381.0 L930.3 379.0 L930.2 377.0 L931.0 375.0 L930.4 373.0 L930.1 371.0 L930.0 369.0 L928.3 367.0 L928.0 365.0 L929.5 362.5 L930.0 360.0 L930.2 358.0 L930.0 356.0 L929.5 354.0 L929.4 352.0 L929.5 350.0 L928.4 348.0 L928.1 346.0 L927.6 344.0 L928.3 342.0 L927.5 340.0 L927.0 338.0 L926.8 336.0 L926.5 334.0 L927.6 332.0 L927.0 330.0 L927.8 328.0 L927.7 326.0 L927.3 324.0 L927.4 322.0 L928.0 320.0 L927.7 318.0 L927.9 316.0 L927.5 314.0 L928.0 312.0 L928.9 309.7 L929.6 307.3 L931.0 305.0 L931.5 303.0 L931.3 301.0 L930.3 299.0 L930.0 297.0 L929.3 294.8 L930.2 292.5 L928.9 290.2 L929.0 288.0 L928.1 286.0 L927.0 284.0 L926.9 282.0 L926.5 280.0 L927.3 278.0 L928.3 276.0 L928.6 274.0 L930.0 272.0 L929.3 269.7 L927.9 267.3 L928.0 265.0 L928.1 263.0 L928.3 261.0 L929.3 259.0 L929.3 257.0 L930.5 255.0 L929.5 253.0 L929.8 251.0 L929.5 249.0 L929.8 247.0 L929.5 245.0 L931.3 242.5 L933.0 240.0 L932.8 238.0 L932.1 236.0 L931.5 234.0 L931.2 232.0 L930.0 230.0 L928.6 227.5 L927.5 225.0 L928.0 222.5 L929.0 220.0 L929.6 217.7 L928.1 215.3 L928.5 213.0 L929.2 211.0 L929.5 209.0 L928.9 207.0 L930.0 205.0 L930.8 203.0 L931.1 201.0 L931.0 199.0 L931.0 197.0 L930.7 194.7 L930.2 192.3 L929.0 190.0 L929.1 187.7 L930.4 185.3 L931.0 183.0 L930.0 181.0 L929.5 179.0 L928.0 177.0 L929.3 174.7 L930.2 172.3 L930.5 170.0 L930.8 168.0 L931.4 166.0 L931.3 164.0 L931.4 162.0 L931.3 160.0 L929.0 157.0 L929.6 155.0 L931.0 153.0 L929.5 150.5 L929.5 148.0 L927.9 146.0 L927.3 144.0 L926.5 142.0 L926.4 140.0 L928.0 138.0 L928.0 136.0 L928.6 134.0 L929.2 132.0 L929.5 130.0 L929.5 128.0 L929.3 126.0 L928.7 124.0 L928.5 122.0 L928.9 120.0 L931.3 118.0 L932.0 116.0 L931.2 114.0 L929.7 112.0 L928.5 110.0 L928.4 107.7 L928.4 105.3 L928.0 103.0 L928.0 100.7 L929.7 98.3 L930.0 96.0 L929.4 94.0 L929.0 92.0 L929.5 90.0 L929.9 87.5 L931.0 85.0 L930.9 82.5 L930.0 80.0 L929.0 78.0 L929.0 76.0 L927.6 73.5 L925.5 71.0 L929.0 68.0 L930.8 66.0 L931.0 64.0 L932.0 62.0 L930.5 59.7 L929.3 57.3 L928.0 55.0 L929.3 52.5 L930.0 50.0 L929.7 47.5 L928.5 45.0 L928.2 42.7 L927.7 40.3 L927.0 38.0 L926.8 36.0 L927.4 34.0 L928.1 32.0 L929.0 30.0 L928.6 27.5 L927.5 25.0 L927.4 22.7 L927.9 20.3 L928.0 18.0 L928.6 16.0 L930.0 14.0 L932.0 12.0 L930.8 9.7 L930.6 7.3 L929.5 5.0 L928.8 2.5 L927.5 0.0 L927.5 -2.0 L938 0 L938 636 L0 636 Z" fill="#fff"/><path d="M0.0 625.4 L2.2 625.1 L4.3 624.8 L6.5 625.6 L8.7 624.7 L10.8 625.5 L13.0 625.4 L15.0 625.1 L17.0 624.4 L19.0 625.0 L21.0 625.3 L23.0 624.9 L25.0 626.0 L27.3 625.6 L29.7 624.6 L32.0 625.0 L34.0 624.6 L36.0 625.4 L38.0 626.3 L40.0 626.0 L42.0 625.3 L44.0 625.4 L46.0 625.9 L48.0 626.3 L50.0 625.5 L52.0 625.5 L54.0 625.1 L56.0 625.9 L58.0 625.0 L60.5 624.2 L63.0 624.8 L65.0 626.5 L67.0 627.0 L70.0 628.0 L72.0 627.7 L74.0 627.4 L76.0 627.4 L78.0 627.7 L80.0 628.0 L82.0 628.4 L84.0 627.3 L86.0 627.8 L88.0 627.8 L90.0 627.5 L92.0 627.5 L94.0 628.0 L96.0 627.4 L98.0 627.6 L100.0 628.5 L102.0 628.1 L104.0 629.0 L106.0 628.7 L108.0 628.6 L110.0 629.0 L112.0 629.3 L114.0 629.2 L116.0 629.1 L118.0 630.0 L120.0 629.7 L122.0 630.0 L124.0 629.2 L126.0 629.7 L128.0 629.6 L130.0 630.1 L132.0 629.8 L134.0 629.1 L136.0 630.1 L138.0 628.7 L140.0 629.3 L142.5 628.5 L145.0 628.0 L147.3 628.2 L149.7 627.1 L152.0 627.5 L154.0 627.7 L156.0 627.1 L158.0 628.3 L160.0 628.2 L162.0 628.9 L164.0 628.8 L166.0 629.6 L168.0 628.9 L170.0 629.5 L172.5 630.1 L175.0 630.0 L177.3 628.7 L179.7 627.1 L182.0 625.5 L184.0 625.9 L186.0 627.0 L188.0 627.0 L190.3 628.5 L192.7 628.6 L195.0 629.5 L197.5 628.3 L200.0 626.5 L202.0 626.3 L204.0 627.8 L206.0 628.0 L208.2 628.7 L210.5 629.8 L212.8 630.0 L215.0 630.0 L217.1 629.7 L219.3 629.8 L221.4 630.3 L223.6 629.2 L225.7 629.9 L227.9 629.5 L230.0 630.0 L232.0 629.2 L234.0 629.0 L236.0 630.0 L238.0 628.8 L240.0 629.3 L242.0 628.8 L244.0 628.8 L246.0 629.5 L248.0 628.1 L250.0 628.6 L252.5 629.2 L255.0 630.0 L257.0 630.2 L259.0 630.8 L261.0 630.8 L263.0 631.0 L265.0 630.5 L267.0 629.9 L269.0 630.0 L271.0 629.7 L273.0 630.3 L275.0 629.5 L277.3 629.9 L279.7 628.3 L282.0 628.5 L284.0 628.4 L286.0 628.8 L288.0 629.2 L290.0 630.0 L292.0 629.6 L294.0 629.4 L296.0 628.5 L298.0 628.5 L300.3 627.2 L302.7 627.4 L305.0 627.0 L307.3 627.0 L309.7 627.4 L312.0 627.5 L314.0 628.1 L316.0 627.6 L318.0 627.2 L320.0 627.3 L322.0 627.0 L324.0 628.1 L326.0 628.0 L328.0 629.5 L330.3 629.8 L332.7 629.3 L335.0 628.5 L337.0 628.8 L339.0 628.4 L341.0 627.4 L343.0 627.1 L345.0 627.0 L347.5 626.9 L350.0 628.0 L352.0 628.2 L354.0 627.3 L356.0 627.3 L358.0 627.5 L360.0 628.0 L362.0 627.5 L364.0 627.7 L366.0 627.3 L368.0 628.0 L370.3 627.9 L372.7 628.8 L375.0 630.0 L377.0 628.6 L379.0 628.3 L381.0 627.0 L383.0 627.0 L385.0 627.3 L387.0 626.6 L389.0 625.6 L391.0 625.5 L393.0 625.3 L395.0 625.1 L397.0 625.0 L399.5 625.4 L402.0 627.0 L404.2 627.6 L406.3 628.0 L408.5 627.2 L410.7 627.3 L412.8 626.8 L415.0 627.5 L417.0 627.2 L419.0 627.8 L421.0 628.0 L423.0 629.2 L425.0 629.0 L427.0 628.1 L429.0 627.5 L431.0 628.6 L433.0 627.5 L435.0 627.2 L437.0 626.3 L439.0 626.6 L441.0 625.4 L443.0 625.9 L445.0 625.5 L447.3 627.1 L449.7 627.7 L452.0 628.0 L454.0 627.5 L456.0 626.0 L458.0 625.5 L460.3 625.8 L462.7 626.0 L465.0 627.0 L467.5 626.7 L470.0 625.5 L472.0 625.8 L474.0 626.3 L476.0 625.8 L478.0 625.9 L480.0 626.5 L482.0 626.7 L484.0 626.7 L486.0 626.2 L488.0 625.8 L490.0 625.0 L492.3 626.5 L494.7 627.4 L497.0 628.0 L499.5 627.1 L502.0 627.0 L504.0 627.5 L506.0 627.8 L508.0 627.7 L510.0 629.0 L512.0 628.5 L514.0 629.2 L516.0 629.5 L518.0 630.5 L520.0 630.5 L522.0 631.1 L524.0 630.2 L526.0 630.9 L528.0 630.9 L530.0 630.0 L532.5 628.0 L535.0 624.5 L537.0 624.1 L539.0 623.7 L541.0 623.5 L543.0 623.2 L545.0 623.5 L547.5 624.8 L550.0 627.0 L552.5 627.9 L555.0 628.5 L557.3 629.5 L559.7 629.7 L562.0 629.5 L565.0 625.5 L567.0 625.3 L569.0 625.3 L571.0 625.4 L573.0 624.0 L575.0 624.5 L577.0 625.0 L579.0 625.7 L581.0 625.7 L583.0 625.5 L585.0 626.7 L587.0 627.0 L589.5 625.2 L592.0 623.5 L594.0 623.2 L596.0 624.5 L598.0 624.0 L600.0 624.5 L602.3 625.1 L604.7 625.6 L607.0 625.0 L609.0 625.2 L611.0 625.6 L613.0 626.8 L615.0 626.5 L617.0 627.2 L619.0 626.7 L621.0 627.0 L623.0 628.0 L625.0 625.9 L627.0 625.0 L629.5 625.6 L632.0 625.0 L634.0 625.4 L636.0 624.2 L638.0 625.1 L640.0 624.5 L642.5 623.8 L645.0 621.5 L647.5 623.0 L650.0 624.0 L652.0 623.9 L654.0 624.3 L656.0 623.7 L658.0 623.6 L660.0 624.5 L662.0 624.9 L664.0 624.0 L666.0 623.4 L668.0 623.0 L670.3 624.4 L672.7 624.2 L675.0 625.0 L677.5 624.6 L680.0 623.0 L682.1 623.7 L684.3 622.8 L686.4 623.0 L688.6 623.2 L690.7 623.3 L692.9 624.0 L695.0 624.0 L697.5 624.6 L700.0 626.0 L702.5 626.9 L705.0 628.0 L707.3 626.7 L709.7 627.3 L712.0 626.0 L714.0 625.3 L716.0 625.0 L718.0 624.7 L720.0 624.1 L722.0 624.8 L724.0 624.2 L726.0 625.1 L728.0 624.5 L730.3 625.0 L732.7 625.6 L735.0 626.0 L737.0 625.6 L739.0 624.4 L741.0 624.7 L743.0 623.9 L745.0 624.0 L748.0 622.0 L750.3 622.0 L752.7 624.1 L755.0 624.5 L757.5 622.7 L760.0 622.0 L762.5 622.2 L765.0 622.5 L767.5 624.6 L770.0 626.0 L772.5 626.6 L775.0 627.0 L777.0 626.5 L779.0 626.6 L781.0 626.5 L783.0 626.7 L785.0 626.0 L787.0 625.8 L789.0 626.9 L791.0 626.8 L793.0 627.2 L795.0 628.0 L797.5 626.9 L800.0 625.0 L802.0 625.5 L804.0 626.1 L806.0 626.9 L808.0 627.0 L810.0 626.7 L812.0 625.0 L814.0 626.2 L816.0 627.8 L818.0 629.0 L820.3 628.3 L822.7 627.7 L825.0 627.0 L827.3 627.3 L829.7 626.9 L832.0 627.0 L834.0 627.6 L836.0 628.0 L838.0 629.2 L840.0 629.0 L842.5 629.8 L845.0 630.0 L847.5 629.6 L850.0 628.0 L852.5 629.7 L855.0 630.0 L857.5 628.6 L860.0 628.0 L862.0 628.6 L864.0 629.7 L866.0 630.0 L868.0 630.0 L870.3 629.8 L872.7 630.1 L875.0 631.0 L877.5 630.7 L880.0 630.5 L882.0 629.3 L884.0 629.1 L886.0 628.3 L888.0 628.5 L890.3 627.8 L892.7 627.0 L895.0 625.5 L897.0 625.7 L899.0 624.1 L901.0 624.6 L903.0 624.2 L905.0 623.5 L907.5 623.2 L910.0 624.0 L912.5 625.6 L915.0 626.0 L917.5 625.7 L920.0 624.0 L922.5 624.6 L925.0 626.0 L927.0 625.2 L929.0 623.0 L927.0 620.0 L927.0 618.0 L927.2 616.0 L928.2 614.0 L927.5 612.0 L928.5 609.7 L928.0 607.3 L929.0 605.0 L928.1 602.5 L927.5 600.0 L927.7 597.7 L927.6 595.3 L928.0 593.0 L928.5 590.5 L930.0 588.0 L929.6 586.0 L930.1 584.0 L928.9 582.0 L929.5 580.0 L929.0 578.0 L928.2 576.0 L926.9 574.0 L927.0 572.0 L927.7 569.7 L929.2 567.3 L930.0 565.0 L930.2 562.7 L929.6 560.3 L930.5 558.0 L930.3 556.0 L929.0 554.0 L927.5 552.0 L928.4 549.7 L927.2 547.3 L928.0 545.0 L925.8 542.5 L924.4 540.0 L925.5 537.5 L928.0 535.0 L928.3 533.0 L927.4 531.0 L927.1 529.0 L927.5 527.0 L927.5 525.0 L928.7 522.7 L929.0 520.3 L929.0 518.0 L927.7 516.0 L926.7 514.0 L927.0 512.0 L925.5 510.0 L927.4 507.7 L929.5 505.3 L931.0 503.0 L930.2 501.0 L930.0 499.0 L930.9 497.0 L930.5 495.0 L930.0 493.0 L929.0 491.0 L930.0 489.0 L929.1 487.0 L928.5 485.0 L930.0 482.5 L930.6 480.0 L929.4 478.0 L930.1 476.0 L928.4 474.0 L929.1 472.0 L927.9 470.0 L927.5 468.0 L927.3 466.0 L927.8 464.0 L928.5 462.0 L927.5 460.0 L928.0 458.0 L928.9 455.5 L931.0 453.0 L930.8 451.0 L930.1 449.0 L929.6 447.0 L930.0 445.0 L929.1 442.8 L928.5 440.5 L928.4 438.2 L928.5 436.0 L927.8 434.0 L927.4 432.0 L927.8 430.0 L927.0 428.0 L927.3 426.0 L928.3 424.0 L928.4 422.0 L929.5 420.0 L929.0 418.0 L928.2 416.0 L928.4 414.0 L928.5 412.0 L928.2 409.7 L929.9 407.3 L930.0 405.0 L930.7 402.5 L931.3 400.0 L930.2 398.0 L930.1 396.0 L930.3 394.0 L929.0 392.0 L928.2 389.8 L929.3 387.5 L928.5 385.2 L928.5 383.0 L929.1 381.0 L930.3 379.0 L930.2 377.0 L931.0 375.0 L930.4 373.0 L930.1 371.0 L930.0 369.0 L928.3 367.0 L928.0 365.0 L929.5 362.5 L930.0 360.0 L930.2 358.0 L930.0 356.0 L929.5 354.0 L929.4 352.0 L929.5 350.0 L928.4 348.0 L928.1 346.0 L927.6 344.0 L928.3 342.0 L927.5 340.0 L927.0 338.0 L926.8 336.0 L926.5 334.0 L927.6 332.0 L927.0 330.0 L927.8 328.0 L927.7 326.0 L927.3 324.0 L927.4 322.0 L928.0 320.0 L927.7 318.0 L927.9 316.0 L927.5 314.0 L928.0 312.0 L928.9 309.7 L929.6 307.3 L931.0 305.0 L931.5 303.0 L931.3 301.0 L930.3 299.0 L930.0 297.0 L929.3 294.8 L930.2 292.5 L928.9 290.2 L929.0 288.0 L928.1 286.0 L927.0 284.0 L926.9 282.0 L926.5 280.0 L927.3 278.0 L928.3 276.0 L928.6 274.0 L930.0 272.0 L929.3 269.7 L927.9 267.3 L928.0 265.0 L928.1 263.0 L928.3 261.0 L929.3 259.0 L929.3 257.0 L930.5 255.0 L929.5 253.0 L929.8 251.0 L929.5 249.0 L929.8 247.0 L929.5 245.0 L931.3 242.5 L933.0 240.0 L932.8 238.0 L932.1 236.0 L931.5 234.0 L931.2 232.0 L930.0 230.0 L928.6 227.5 L927.5 225.0 L928.0 222.5 L929.0 220.0 L929.6 217.7 L928.1 215.3 L928.5 213.0 L929.2 211.0 L929.5 209.0 L928.9 207.0 L930.0 205.0 L930.8 203.0 L931.1 201.0 L931.0 199.0 L931.0 197.0 L930.7 194.7 L930.2 192.3 L929.0 190.0 L929.1 187.7 L930.4 185.3 L931.0 183.0 L930.0 181.0 L929.5 179.0 L928.0 177.0 L929.3 174.7 L930.2 172.3 L930.5 170.0 L930.8 168.0 L931.4 166.0 L931.3 164.0 L931.4 162.0 L931.3 160.0 L929.0 157.0 L929.6 155.0 L931.0 153.0 L929.5 150.5 L929.5 148.0 L927.9 146.0 L927.3 144.0 L926.5 142.0 L926.4 140.0 L928.0 138.0 L928.0 136.0 L928.6 134.0 L929.2 132.0 L929.5 130.0 L929.5 128.0 L929.3 126.0 L928.7 124.0 L928.5 122.0 L928.9 120.0 L931.3 118.0 L932.0 116.0 L931.2 114.0 L929.7 112.0 L928.5 110.0 L928.4 107.7 L928.4 105.3 L928.0 103.0 L928.0 100.7 L929.7 98.3 L930.0 96.0 L929.4 94.0 L929.0 92.0 L929.5 90.0 L929.9 87.5 L931.0 85.0 L930.9 82.5 L930.0 80.0 L929.0 78.0 L929.0 76.0 L927.6 73.5 L925.5 71.0 L929.0 68.0 L930.8 66.0 L931.0 64.0 L932.0 62.0 L930.5 59.7 L929.3 57.3 L928.0 55.0 L929.3 52.5 L930.0 50.0 L929.7 47.5 L928.5 45.0 L928.2 42.7 L927.7 40.3 L927.0 38.0 L926.8 36.0 L927.4 34.0 L928.1 32.0 L929.0 30.0 L928.6 27.5 L927.5 25.0 L927.4 22.7 L927.9 20.3 L928.0 18.0 L928.6 16.0 L930.0 14.0 L932.0 12.0 L930.8 9.7 L930.6 7.3 L929.5 5.0 L928.8 2.5 L927.5 0.0 L927.5 -2.0" fill="none" stroke="#000" stroke-opacity="0.25" stroke-width="4" filter="url(#bl)" transform="translate(1,1.5)"/><path d="M0.0 625.4 L2.2 625.1 L4.3 624.8 L6.5 625.6 L8.7 624.7 L10.8 625.5 L13.0 625.4 L15.0 625.1 L17.0 624.4 L19.0 625.0 L21.0 625.3 L23.0 624.9 L25.0 626.0 L27.3 625.6 L29.7 624.6 L32.0 625.0 L34.0 624.6 L36.0 625.4 L38.0 626.3 L40.0 626.0 L42.0 625.3 L44.0 625.4 L46.0 625.9 L48.0 626.3 L50.0 625.5 L52.0 625.5 L54.0 625.1 L56.0 625.9 L58.0 625.0 L60.5 624.2 L63.0 624.8 L65.0 626.5 L67.0 627.0 L70.0 628.0 L72.0 627.7 L74.0 627.4 L76.0 627.4 L78.0 627.7 L80.0 628.0 L82.0 628.4 L84.0 627.3 L86.0 627.8 L88.0 627.8 L90.0 627.5 L92.0 627.5 L94.0 628.0 L96.0 627.4 L98.0 627.6 L100.0 628.5 L102.0 628.1 L104.0 629.0 L106.0 628.7 L108.0 628.6 L110.0 629.0 L112.0 629.3 L114.0 629.2 L116.0 629.1 L118.0 630.0 L120.0 629.7 L122.0 630.0 L124.0 629.2 L126.0 629.7 L128.0 629.6 L130.0 630.1 L132.0 629.8 L134.0 629.1 L136.0 630.1 L138.0 628.7 L140.0 629.3 L142.5 628.5 L145.0 628.0 L147.3 628.2 L149.7 627.1 L152.0 627.5 L154.0 627.7 L156.0 627.1 L158.0 628.3 L160.0 628.2 L162.0 628.9 L164.0 628.8 L166.0 629.6 L168.0 628.9 L170.0 629.5 L172.5 630.1 L175.0 630.0 L177.3 628.7 L179.7 627.1 L182.0 625.5 L184.0 625.9 L186.0 627.0 L188.0 627.0 L190.3 628.5 L192.7 628.6 L195.0 629.5 L197.5 628.3 L200.0 626.5 L202.0 626.3 L204.0 627.8 L206.0 628.0 L208.2 628.7 L210.5 629.8 L212.8 630.0 L215.0 630.0 L217.1 629.7 L219.3 629.8 L221.4 630.3 L223.6 629.2 L225.7 629.9 L227.9 629.5 L230.0 630.0 L232.0 629.2 L234.0 629.0 L236.0 630.0 L238.0 628.8 L240.0 629.3 L242.0 628.8 L244.0 628.8 L246.0 629.5 L248.0 628.1 L250.0 628.6 L252.5 629.2 L255.0 630.0 L257.0 630.2 L259.0 630.8 L261.0 630.8 L263.0 631.0 L265.0 630.5 L267.0 629.9 L269.0 630.0 L271.0 629.7 L273.0 630.3 L275.0 629.5 L277.3 629.9 L279.7 628.3 L282.0 628.5 L284.0 628.4 L286.0 628.8 L288.0 629.2 L290.0 630.0 L292.0 629.6 L294.0 629.4 L296.0 628.5 L298.0 628.5 L300.3 627.2 L302.7 627.4 L305.0 627.0 L307.3 627.0 L309.7 627.4 L312.0 627.5 L314.0 628.1 L316.0 627.6 L318.0 627.2 L320.0 627.3 L322.0 627.0 L324.0 628.1 L326.0 628.0 L328.0 629.5 L330.3 629.8 L332.7 629.3 L335.0 628.5 L337.0 628.8 L339.0 628.4 L341.0 627.4 L343.0 627.1 L345.0 627.0 L347.5 626.9 L350.0 628.0 L352.0 628.2 L354.0 627.3 L356.0 627.3 L358.0 627.5 L360.0 628.0 L362.0 627.5 L364.0 627.7 L366.0 627.3 L368.0 628.0 L370.3 627.9 L372.7 628.8 L375.0 630.0 L377.0 628.6 L379.0 628.3 L381.0 627.0 L383.0 627.0 L385.0 627.3 L387.0 626.6 L389.0 625.6 L391.0 625.5 L393.0 625.3 L395.0 625.1 L397.0 625.0 L399.5 625.4 L402.0 627.0 L404.2 627.6 L406.3 628.0 L408.5 627.2 L410.7 627.3 L412.8 626.8 L415.0 627.5 L417.0 627.2 L419.0 627.8 L421.0 628.0 L423.0 629.2 L425.0 629.0 L427.0 628.1 L429.0 627.5 L431.0 628.6 L433.0 627.5 L435.0 627.2 L437.0 626.3 L439.0 626.6 L441.0 625.4 L443.0 625.9 L445.0 625.5 L447.3 627.1 L449.7 627.7 L452.0 628.0 L454.0 627.5 L456.0 626.0 L458.0 625.5 L460.3 625.8 L462.7 626.0 L465.0 627.0 L467.5 626.7 L470.0 625.5 L472.0 625.8 L474.0 626.3 L476.0 625.8 L478.0 625.9 L480.0 626.5 L482.0 626.7 L484.0 626.7 L486.0 626.2 L488.0 625.8 L490.0 625.0 L492.3 626.5 L494.7 627.4 L497.0 628.0 L499.5 627.1 L502.0 627.0 L504.0 627.5 L506.0 627.8 L508.0 627.7 L510.0 629.0 L512.0 628.5 L514.0 629.2 L516.0 629.5 L518.0 630.5 L520.0 630.5 L522.0 631.1 L524.0 630.2 L526.0 630.9 L528.0 630.9 L530.0 630.0 L532.5 628.0 L535.0 624.5 L537.0 624.1 L539.0 623.7 L541.0 623.5 L543.0 623.2 L545.0 623.5 L547.5 624.8 L550.0 627.0 L552.5 627.9 L555.0 628.5 L557.3 629.5 L559.7 629.7 L562.0 629.5 L565.0 625.5 L567.0 625.3 L569.0 625.3 L571.0 625.4 L573.0 624.0 L575.0 624.5 L577.0 625.0 L579.0 625.7 L581.0 625.7 L583.0 625.5 L585.0 626.7 L587.0 627.0 L589.5 625.2 L592.0 623.5 L594.0 623.2 L596.0 624.5 L598.0 624.0 L600.0 624.5 L602.3 625.1 L604.7 625.6 L607.0 625.0 L609.0 625.2 L611.0 625.6 L613.0 626.8 L615.0 626.5 L617.0 627.2 L619.0 626.7 L621.0 627.0 L623.0 628.0 L625.0 625.9 L627.0 625.0 L629.5 625.6 L632.0 625.0 L634.0 625.4 L636.0 624.2 L638.0 625.1 L640.0 624.5 L642.5 623.8 L645.0 621.5 L647.5 623.0 L650.0 624.0 L652.0 623.9 L654.0 624.3 L656.0 623.7 L658.0 623.6 L660.0 624.5 L662.0 624.9 L664.0 624.0 L666.0 623.4 L668.0 623.0 L670.3 624.4 L672.7 624.2 L675.0 625.0 L677.5 624.6 L680.0 623.0 L682.1 623.7 L684.3 622.8 L686.4 623.0 L688.6 623.2 L690.7 623.3 L692.9 624.0 L695.0 624.0 L697.5 624.6 L700.0 626.0 L702.5 626.9 L705.0 628.0 L707.3 626.7 L709.7 627.3 L712.0 626.0 L714.0 625.3 L716.0 625.0 L718.0 624.7 L720.0 624.1 L722.0 624.8 L724.0 624.2 L726.0 625.1 L728.0 624.5 L730.3 625.0 L732.7 625.6 L735.0 626.0 L737.0 625.6 L739.0 624.4 L741.0 624.7 L743.0 623.9 L745.0 624.0 L748.0 622.0 L750.3 622.0 L752.7 624.1 L755.0 624.5 L757.5 622.7 L760.0 622.0 L762.5 622.2 L765.0 622.5 L767.5 624.6 L770.0 626.0 L772.5 626.6 L775.0 627.0 L777.0 626.5 L779.0 626.6 L781.0 626.5 L783.0 626.7 L785.0 626.0 L787.0 625.8 L789.0 626.9 L791.0 626.8 L793.0 627.2 L795.0 628.0 L797.5 626.9 L800.0 625.0 L802.0 625.5 L804.0 626.1 L806.0 626.9 L808.0 627.0 L810.0 626.7 L812.0 625.0 L814.0 626.2 L816.0 627.8 L818.0 629.0 L820.3 628.3 L822.7 627.7 L825.0 627.0 L827.3 627.3 L829.7 626.9 L832.0 627.0 L834.0 627.6 L836.0 628.0 L838.0 629.2 L840.0 629.0 L842.5 629.8 L845.0 630.0 L847.5 629.6 L850.0 628.0 L852.5 629.7 L855.0 630.0 L857.5 628.6 L860.0 628.0 L862.0 628.6 L864.0 629.7 L866.0 630.0 L868.0 630.0 L870.3 629.8 L872.7 630.1 L875.0 631.0 L877.5 630.7 L880.0 630.5 L882.0 629.3 L884.0 629.1 L886.0 628.3 L888.0 628.5 L890.3 627.8 L892.7 627.0 L895.0 625.5 L897.0 625.7 L899.0 624.1 L901.0 624.6 L903.0 624.2 L905.0 623.5 L907.5 623.2 L910.0 624.0 L912.5 625.6 L915.0 626.0 L917.5 625.7 L920.0 624.0 L922.5 624.6 L925.0 626.0 L927.0 625.2 L929.0 623.0 L927.0 620.0 L927.0 618.0 L927.2 616.0 L928.2 614.0 L927.5 612.0 L928.5 609.7 L928.0 607.3 L929.0 605.0 L928.1 602.5 L927.5 600.0 L927.7 597.7 L927.6 595.3 L928.0 593.0 L928.5 590.5 L930.0 588.0 L929.6 586.0 L930.1 584.0 L928.9 582.0 L929.5 580.0 L929.0 578.0 L928.2 576.0 L926.9 574.0 L927.0 572.0 L927.7 569.7 L929.2 567.3 L930.0 565.0 L930.2 562.7 L929.6 560.3 L930.5 558.0 L930.3 556.0 L929.0 554.0 L927.5 552.0 L928.4 549.7 L927.2 547.3 L928.0 545.0 L925.8 542.5 L924.4 540.0 L925.5 537.5 L928.0 535.0 L928.3 533.0 L927.4 531.0 L927.1 529.0 L927.5 527.0 L927.5 525.0 L928.7 522.7 L929.0 520.3 L929.0 518.0 L927.7 516.0 L926.7 514.0 L927.0 512.0 L925.5 510.0 L927.4 507.7 L929.5 505.3 L931.0 503.0 L930.2 501.0 L930.0 499.0 L930.9 497.0 L930.5 495.0 L930.0 493.0 L929.0 491.0 L930.0 489.0 L929.1 487.0 L928.5 485.0 L930.0 482.5 L930.6 480.0 L929.4 478.0 L930.1 476.0 L928.4 474.0 L929.1 472.0 L927.9 470.0 L927.5 468.0 L927.3 466.0 L927.8 464.0 L928.5 462.0 L927.5 460.0 L928.0 458.0 L928.9 455.5 L931.0 453.0 L930.8 451.0 L930.1 449.0 L929.6 447.0 L930.0 445.0 L929.1 442.8 L928.5 440.5 L928.4 438.2 L928.5 436.0 L927.8 434.0 L927.4 432.0 L927.8 430.0 L927.0 428.0 L927.3 426.0 L928.3 424.0 L928.4 422.0 L929.5 420.0 L929.0 418.0 L928.2 416.0 L928.4 414.0 L928.5 412.0 L928.2 409.7 L929.9 407.3 L930.0 405.0 L930.7 402.5 L931.3 400.0 L930.2 398.0 L930.1 396.0 L930.3 394.0 L929.0 392.0 L928.2 389.8 L929.3 387.5 L928.5 385.2 L928.5 383.0 L929.1 381.0 L930.3 379.0 L930.2 377.0 L931.0 375.0 L930.4 373.0 L930.1 371.0 L930.0 369.0 L928.3 367.0 L928.0 365.0 L929.5 362.5 L930.0 360.0 L930.2 358.0 L930.0 356.0 L929.5 354.0 L929.4 352.0 L929.5 350.0 L928.4 348.0 L928.1 346.0 L927.6 344.0 L928.3 342.0 L927.5 340.0 L927.0 338.0 L926.8 336.0 L926.5 334.0 L927.6 332.0 L927.0 330.0 L927.8 328.0 L927.7 326.0 L927.3 324.0 L927.4 322.0 L928.0 320.0 L927.7 318.0 L927.9 316.0 L927.5 314.0 L928.0 312.0 L928.9 309.7 L929.6 307.3 L931.0 305.0 L931.5 303.0 L931.3 301.0 L930.3 299.0 L930.0 297.0 L929.3 294.8 L930.2 292.5 L928.9 290.2 L929.0 288.0 L928.1 286.0 L927.0 284.0 L926.9 282.0 L926.5 280.0 L927.3 278.0 L928.3 276.0 L928.6 274.0 L930.0 272.0 L929.3 269.7 L927.9 267.3 L928.0 265.0 L928.1 263.0 L928.3 261.0 L929.3 259.0 L929.3 257.0 L930.5 255.0 L929.5 253.0 L929.8 251.0 L929.5 249.0 L929.8 247.0 L929.5 245.0 L931.3 242.5 L933.0 240.0 L932.8 238.0 L932.1 236.0 L931.5 234.0 L931.2 232.0 L930.0 230.0 L928.6 227.5 L927.5 225.0 L928.0 222.5 L929.0 220.0 L929.6 217.7 L928.1 215.3 L928.5 213.0 L929.2 211.0 L929.5 209.0 L928.9 207.0 L930.0 205.0 L930.8 203.0 L931.1 201.0 L931.0 199.0 L931.0 197.0 L930.7 194.7 L930.2 192.3 L929.0 190.0 L929.1 187.7 L930.4 185.3 L931.0 183.0 L930.0 181.0 L929.5 179.0 L928.0 177.0 L929.3 174.7 L930.2 172.3 L930.5 170.0 L930.8 168.0 L931.4 166.0 L931.3 164.0 L931.4 162.0 L931.3 160.0 L929.0 157.0 L929.6 155.0 L931.0 153.0 L929.5 150.5 L929.5 148.0 L927.9 146.0 L927.3 144.0 L926.5 142.0 L926.4 140.0 L928.0 138.0 L928.0 136.0 L928.6 134.0 L929.2 132.0 L929.5 130.0 L929.5 128.0 L929.3 126.0 L928.7 124.0 L928.5 122.0 L928.9 120.0 L931.3 118.0 L932.0 116.0 L931.2 114.0 L929.7 112.0 L928.5 110.0 L928.4 107.7 L928.4 105.3 L928.0 103.0 L928.0 100.7 L929.7 98.3 L930.0 96.0 L929.4 94.0 L929.0 92.0 L929.5 90.0 L929.9 87.5 L931.0 85.0 L930.9 82.5 L930.0 80.0 L929.0 78.0 L929.0 76.0 L927.6 73.5 L925.5 71.0 L929.0 68.0 L930.8 66.0 L931.0 64.0 L932.0 62.0 L930.5 59.7 L929.3 57.3 L928.0 55.0 L929.3 52.5 L930.0 50.0 L929.7 47.5 L928.5 45.0 L928.2 42.7 L927.7 40.3 L927.0 38.0 L926.8 36.0 L927.4 34.0 L928.1 32.0 L929.0 30.0 L928.6 27.5 L927.5 25.0 L927.4 22.7 L927.9 20.3 L928.0 18.0 L928.6 16.0 L930.0 14.0 L932.0 12.0 L930.8 9.7 L930.6 7.3 L929.5 5.0 L928.8 2.5 L927.5 0.0 L927.5 -2.0" fill="none" stroke="#686868" stroke-width="2.1"/></svg>
</div>
</body></html>
